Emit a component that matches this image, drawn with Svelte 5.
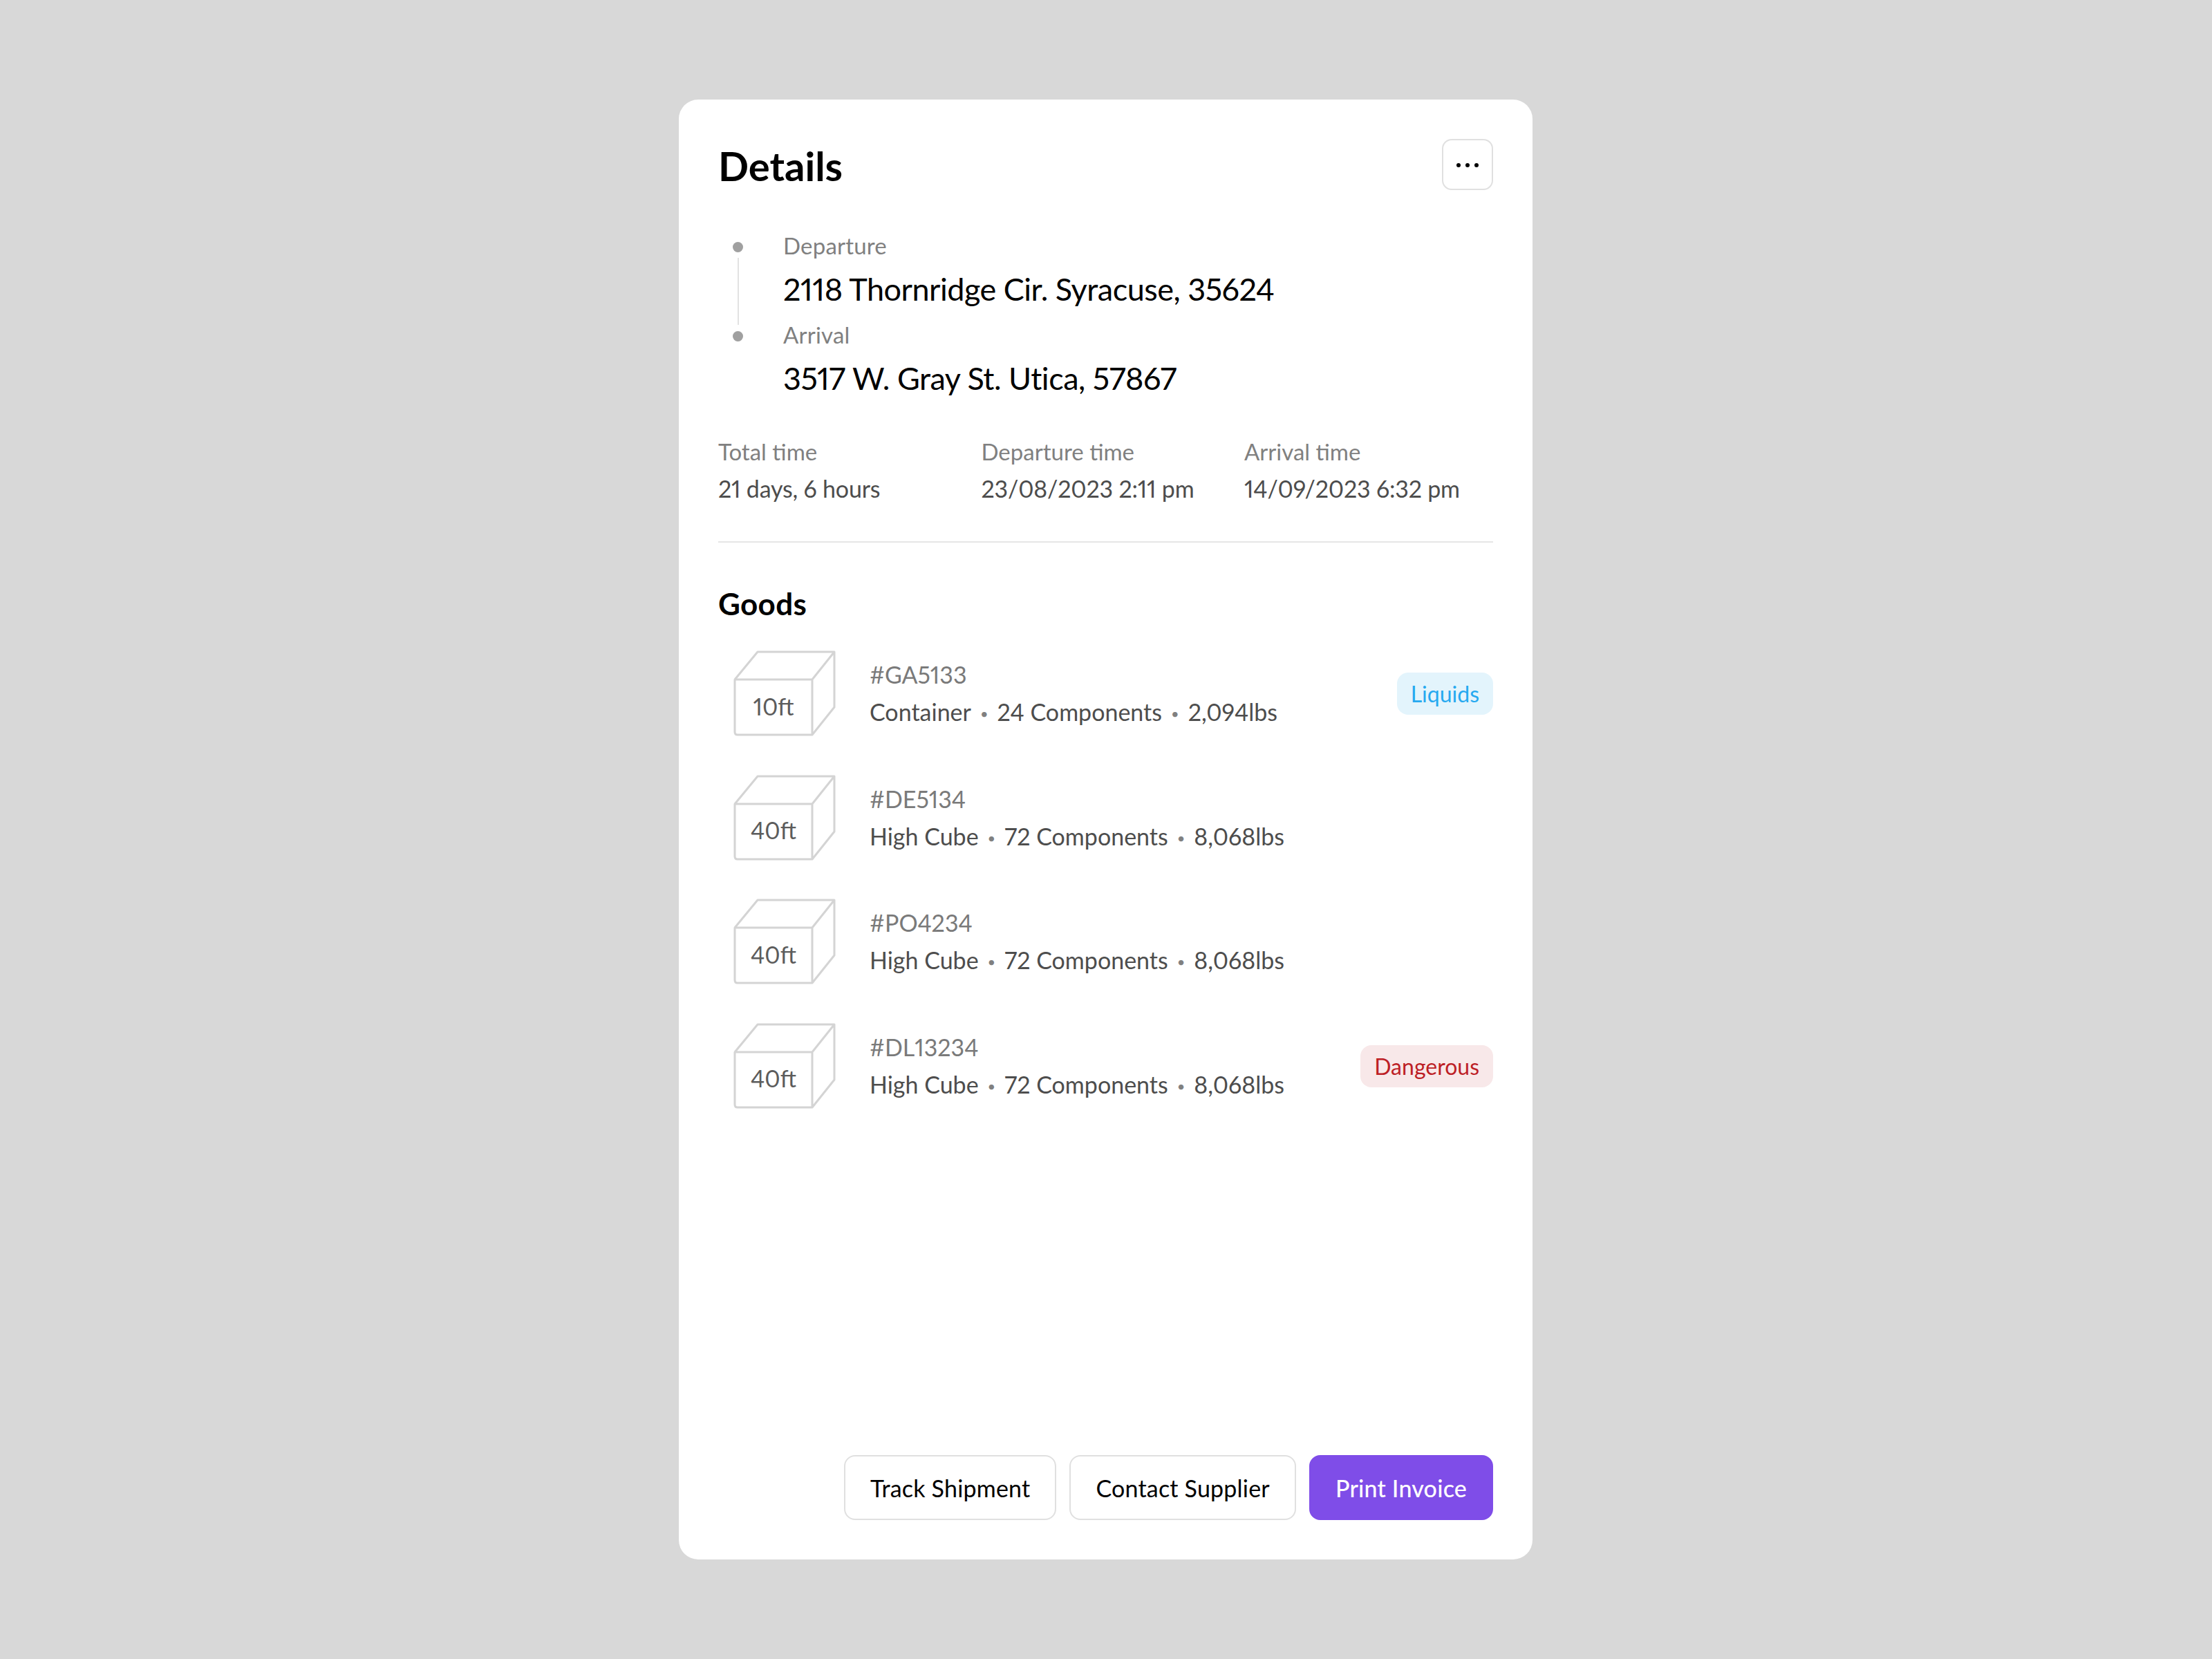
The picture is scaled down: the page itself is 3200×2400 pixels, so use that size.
<script>
  const goods = [
    { size: '10ft', id: '#GA5133', type: 'Container', parts: '24 Components', weight: '2,094lbs', tag: 'Liquids', tone: 'blue' },
    { size: '40ft', id: '#DE5134', type: 'High Cube', parts: '72 Components', weight: '8,068lbs' },
    { size: '40ft', id: '#PO4234', type: 'High Cube', parts: '72 Components', weight: '8,068lbs' },
    { size: '40ft', id: '#DL13234', type: 'High Cube', parts: '72 Components', weight: '8,068lbs', tag: 'Dangerous', tone: 'red' }
  ];
  const times = [
    { label: 'Total time', value: '21 days, 6 hours' },
    { label: 'Departure time', value: '23/08/2023 2:11 pm' },
    { label: 'Arrival time', value: '14/09/2023 6:32 pm' }
  ];
</script>

<div class="page">
  <section class="card">
    <header class="head">
      <h1>Details</h1>
      <button class="more" aria-label="More">
        <svg width="32" height="8" viewBox="0 0 32 8"><circle cx="3" cy="4" r="3" /><circle cx="16" cy="4" r="3" /><circle cx="29" cy="4" r="3" /></svg>
      </button>
    </header>

    <div class="route">
      <div class="stop first">
        <span class="dot"></span>
        <div class="label">Departure</div>
        <div class="addr">2118 Thornridge Cir. Syracuse, 35624</div>
      </div>
      <div class="stop">
        <span class="dot"></span>
        <div class="label">Arrival</div>
        <div class="addr">3517 W. Gray St. Utica, 57867</div>
      </div>
    </div>

    <div class="times">
      {#each times as t}
        <div>
          <div class="t-label">{t.label}</div>
          <div class="t-value">{t.value}</div>
        </div>
      {/each}
    </div>

    <h2>Goods</h2>

    <div class="goods">
      {#each goods as g}
        <div class="item">
          <div class="cube">
            <svg width="148" height="124" viewBox="0 0 148 124" fill="none">
              <path d="M2 42H114V122H6Q2 122 2 118ZM2 42L35 2H146V82L114 122M114 42L146 2" />
            </svg>
            <span class="size">{g.size}</span>
          </div>
          <div class="info">
            <div class="code">{g.id}</div>
            <div class="meta">{g.type}<i>•</i>{g.parts}<i>•</i>{g.weight}</div>
          </div>
          {#if g.tag}
            <span class="tag {g.tone}">{g.tag}</span>
          {/if}
        </div>
      {/each}
    </div>

    <footer class="actions">
      <button class="btn">Track Shipment</button>
      <button class="btn">Contact Supplier</button>
      <button class="btn primary">Print Invoice</button>
    </footer>
  </section>
</div>

<style>
  :global(body) {
    margin: 0;
    background: #d8d8d8;
  }
  .page {
    height: 100vh;
    padding-right: 1px;
    box-sizing: border-box;
    display: flex;
    align-items: center;
    justify-content: center;
    font-family: Lato, "Liberation Sans", sans-serif;
    font-variant-numeric: proportional-nums;
    color: #000;
  }
  .card {
    width: 1235px;
    height: 2112px;
    box-sizing: border-box;
    padding: 57px;
    background: #fff;
    border-radius: 28px;
    display: flex;
    flex-direction: column;
  }
  .head {
    display: flex;
    justify-content: space-between;
    align-items: center;
    height: 74px;
  }
  h1 {
    margin: 4px 0 0;
    font-size: 58px;
    font-weight: 700;
    line-height: 1;
  }
  .more {
    width: 74px;
    height: 74px;
    padding: 2px 0 0;
    display: flex;
    align-items: center;
    justify-content: center;
    background: #fff;
    border: 2px solid #e0e0e0;
    border-radius: 14px;
  }
  .more svg { fill: #000; }

  .route {
    margin-top: 62px;
    padding-left: 94px;
  }
  .stop {
    position: relative;
    height: 129px;
  }
  .dot {
    position: absolute;
    left: -73px;
    top: 13px;
    width: 15px;
    height: 15px;
    border-radius: 50%;
    background: #a0a0a0;
  }
  .first::after {
    content: '';
    position: absolute;
    left: -66px;
    top: 36px;
    width: 2px;
    height: 97px;
    background: #e2e2e2;
  }
  .label {
    font-size: 33px;
    line-height: 36px;
    letter-spacing: 0.2px;
    color: #808080;
  }
  .addr {
    margin-top: 18px;
    font-size: 45px;
    line-height: 54px;
    letter-spacing: -0.5px;
  }

  .times {
    margin-top: 38px;
    padding-bottom: 56px;
    display: grid;
    grid-template-columns: repeat(3, 380.5px);
    border-bottom: 2px solid #e6e6e6;
  }
  .t-label {
    font-size: 33px;
    line-height: 40px;
    color: #808080;
  }
  .t-value {
    margin-top: 14px;
    font-size: 34px;
    line-height: 40px;
    letter-spacing: -0.2px;
    color: #4d4d4d;
  }

  h2 {
    margin: 61px 0 0;
    font-size: 44px;
    font-weight: 700;
    line-height: 54px;
    letter-spacing: 0.3px;
  }
  .goods {
    margin-top: 41px;
  }
  .item {
    height: 179.5px;
    display: flex;
    align-items: flex-start;
    padding-left: 22px;
  }
  .cube {
    position: relative;
    width: 148px;
    height: 124px;
  }
  .cube svg {
    display: block;
  }
  .cube path {
    stroke: #d4d4d4;
    stroke-width: 3;
    stroke-linejoin: round;
  }
  .size {
    position: absolute;
    left: 2px;
    top: 40px;
    width: 112px;
    height: 80px;
    display: flex;
    align-items: center;
    justify-content: center;
    font-size: 34px;
    color: #5c5c5c;
  }
  .info {
    margin-left: 49px;
    margin-top: 15px;
    flex: 1;
  }
  .code {
    font-size: 34px;
    line-height: 40px;
    color: #7a7a7a;
  }
  .meta {
    margin-top: 14px;
    font-size: 34px;
    line-height: 40px;
    color: #4d4d4d;
  }
  .meta i {
    font-style: normal;
    font-size: 20px;
    color: #808080;
    margin: 0 13px;
    vertical-align: 3px;
  }
  .tag {
    margin-top: 32px;
    height: 61px;
    padding: 0 20px;
    display: flex;
    align-items: center;
    font-size: 32px;
    border-radius: 16px;
  }
  .blue {
    background: #e3f4fc;
    color: #26a9f0;
  }
  .red {
    background: #f8e8e9;
    color: #bd1f26;
  }

  .actions {
    margin-top: auto;
    display: flex;
    justify-content: flex-end;
    gap: 19px;
  }
  .btn {
    height: 94px;
    padding: 0 36px;
    font-family: inherit;
    font-size: 34px;
    letter-spacing: 0.2px;
    color: #000;
    background: #fff;
    border: 2px solid #e0e0e0;
    border-radius: 16px;
  }
  .primary {
    color: #fff;
    font-weight: 500;
    background: #7f4de8;
    border-color: #7f4de8;
  }
</style>
